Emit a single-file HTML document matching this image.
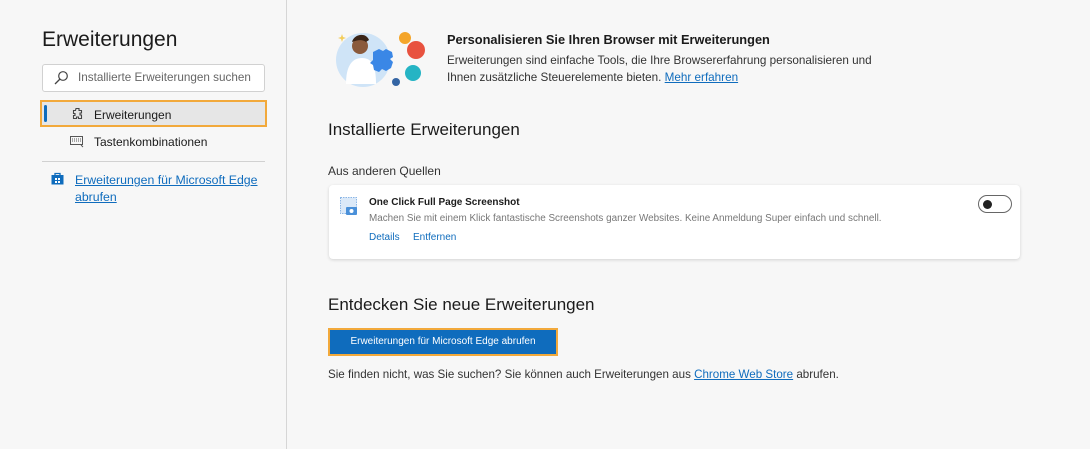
<!DOCTYPE html>
<html><head><meta charset="utf-8"><style>
*{box-sizing:border-box;margin:0;padding:0}
body{width:1090px;height:449px;background:#f7f7f7;font-family:"Liberation Sans",sans-serif;color:#1b1b1b;position:relative;overflow:hidden}
.side{position:absolute;left:0;top:0;width:287px;height:449px;border-right:1px solid #d6d6d6}
.abs{position:absolute}
a{color:#0f6cbd;text-decoration:underline}
</style></head><body>
<div class="side">
 <div class="abs" style="left:42px;top:28px;font-size:21px;">Erweiterungen</div>
 <div class="abs" style="left:42px;top:64px;width:223px;height:28px;background:#fff;border:1px solid #d1d1d1;border-radius:3px"></div>
 <svg class="abs" style="left:53px;top:70px" width="16" height="16" viewBox="0 0 16 16"><circle cx="10" cy="6" r="4.3" fill="none" stroke="#444" stroke-width="1.2"/><path d="M7 9L2 14" stroke="#444" stroke-width="1.3"/></svg>
 <div class="abs" style="left:78px;top:71px;font-size:11.7px;color:#666">Installierte Erweiterungen suchen</div>
 <div class="abs" style="left:40px;top:100px;width:227px;height:27px;background:#e6e6e6;border:2px solid #f2a93b"></div>
 <div class="abs" style="left:44px;top:105px;width:3px;height:17px;background:#0f6cbd;border-radius:2px"></div>
 <svg class="abs" style="left:71px;top:107px" width="13" height="13" viewBox="0 0 13 13"><path d="M5 1.5h3v2h2.5v2.5h-1.5v2h1.5v3.5h-3v-1.5h-2v1.5h-3v-3h1.5v-2h-1.5v-3h2z" fill="none" stroke="#444" stroke-width="1.1"/></svg>
 <div class="abs" style="left:94px;top:108px;font-size:12px">Erweiterungen</div>
 <svg class="abs" style="left:70px;top:136px" width="15" height="12" viewBox="0 0 15 12"><rect x="0.5" y="0.5" width="12" height="8" fill="none" stroke="#555"/><path d="M2 3h9M2 5h9" stroke="#555" stroke-dasharray="1 1"/><path d="M11 9l2 2" stroke="#555"/></svg>
 <div class="abs" style="left:94px;top:135px;font-size:12px">Tastenkombinationen</div>
 <div class="abs" style="left:42px;top:161px;width:223px;height:1px;background:#d1d1d1"></div>
 <svg class="abs" style="left:51px;top:172px" width="13" height="13" viewBox="0 0 13 13"><path d="M4 3V1.5h5V3" fill="none" stroke="#0f6cbd" stroke-width="1.3"/><rect x="0.5" y="3" width="12" height="9.5" fill="#0f6cbd"/><rect x="4" y="6" width="2" height="2" fill="#fff"/><rect x="7" y="6" width="2" height="2" fill="#fff"/><rect x="4" y="9" width="2" height="2" fill="#fff"/><rect x="7" y="9" width="2" height="2" fill="#fff"/></svg>
 <div class="abs" style="left:75px;top:172px;font-size:12.3px;line-height:17px;width:200px"><a>Erweiterungen für Microsoft Edge</a><br><a>abrufen</a></div>
</div>
<svg class="abs" style="left:328px;top:24px" width="105" height="66" viewBox="0 0 105 66">
 <circle cx="35" cy="36" r="27" fill="#cfe4f7"/>
 <path d="M18 60c0-18 6-26 16-26s14 8 14 26z" fill="#fff"/>
 <circle cx="32" cy="22" r="8" fill="#8a5a3c"/><path d="M24 18c2-8 14-10 17-2l-3 2c-4-3-8-2-14 0z" fill="#3b2518"/>
 <path d="M45 28l6-3 4 2 3-2 6 3 1 5-3 2 3 3-2 6-5 3-4-2-3 3-5-2-1-5-3-2 3-3z" fill="#3a87e6"/>
 <circle cx="77" cy="14" r="6" fill="#f4a52a"/><circle cx="88" cy="26" r="9" fill="#e8523f"/>
 <circle cx="85" cy="49" r="8" fill="#25b4c4"/><circle cx="68" cy="58" r="4" fill="#3465a4"/>
 <path d="M14 10l1 3 3 1-3 1-1 3-1-3-3-1 3-1z" fill="#f3cd5a"/>
</svg>
<div class="abs" style="left:447px;top:32px;font-size:12.8px;font-weight:bold">Personalisieren Sie Ihren Browser mit Erweiterungen</div>
<div class="abs" style="left:447px;top:52px;font-size:11.7px;line-height:17px;color:#333">Erweiterungen sind einfache Tools, die Ihre Browsererfahrung personalisieren und<br>Ihnen zusätzliche Steuerelemente bieten. <a>Mehr erfahren</a></div>
<div class="abs" style="left:328px;top:120px;font-size:17px">Installierte Erweiterungen</div>
<div class="abs" style="left:328px;top:164px;font-size:12px;color:#333">Aus anderen Quellen</div>
<div class="abs" style="left:329px;top:185px;width:691px;height:74px;background:#fff;border-radius:4px;box-shadow:0 1px 3px rgba(0,0,0,.15)"></div>
<svg class="abs" style="left:340px;top:197px" width="19" height="19" viewBox="0 0 19 19"><rect x="0.5" y="0.5" width="16" height="16" fill="#dbe9f8" stroke="#8bb6e6" stroke-dasharray="1.5 1"/><rect x="6" y="10" width="11" height="8" rx="1" fill="#4a90d9"/><circle cx="11.5" cy="14" r="2" fill="#fff"/></svg>
<div class="abs" style="left:369px;top:197px;font-size:10px;font-weight:bold">One Click Full Page Screenshot</div>
<div class="abs" style="left:369px;top:213px;font-size:9.9px;color:#777">Machen Sie mit einem Klick fantastische Screenshots ganzer Websites. Keine Anmeldung Super einfach und schnell.</div>
<div class="abs" style="left:369px;top:232px;font-size:10px;color:#0f6cbd">Details</div>
<div class="abs" style="left:413px;top:232px;font-size:10px;color:#0f6cbd">Entfernen</div>
<div class="abs" style="left:978px;top:195px;width:34px;height:18px;border:1px solid #666;border-radius:9px;background:#fff"></div>
<div class="abs" style="left:983px;top:200px;width:9px;height:9px;border-radius:50%;background:#222"></div>
<div class="abs" style="left:328px;top:295px;font-size:17px">Entdecken Sie neue Erweiterungen</div>
<div class="abs" style="left:328px;top:328px;width:230px;height:28px;background:#0f6cbd;border:2px solid #f2a93b;color:#fff;font-size:10px;text-align:center;line-height:24px">Erweiterungen für Microsoft Edge abrufen</div>
<div class="abs" style="left:328px;top:368px;font-size:11.6px;color:#333">Sie finden nicht, was Sie suchen? Sie können auch Erweiterungen aus <a>Chrome Web Store</a> abrufen.</div>
</body></html>
